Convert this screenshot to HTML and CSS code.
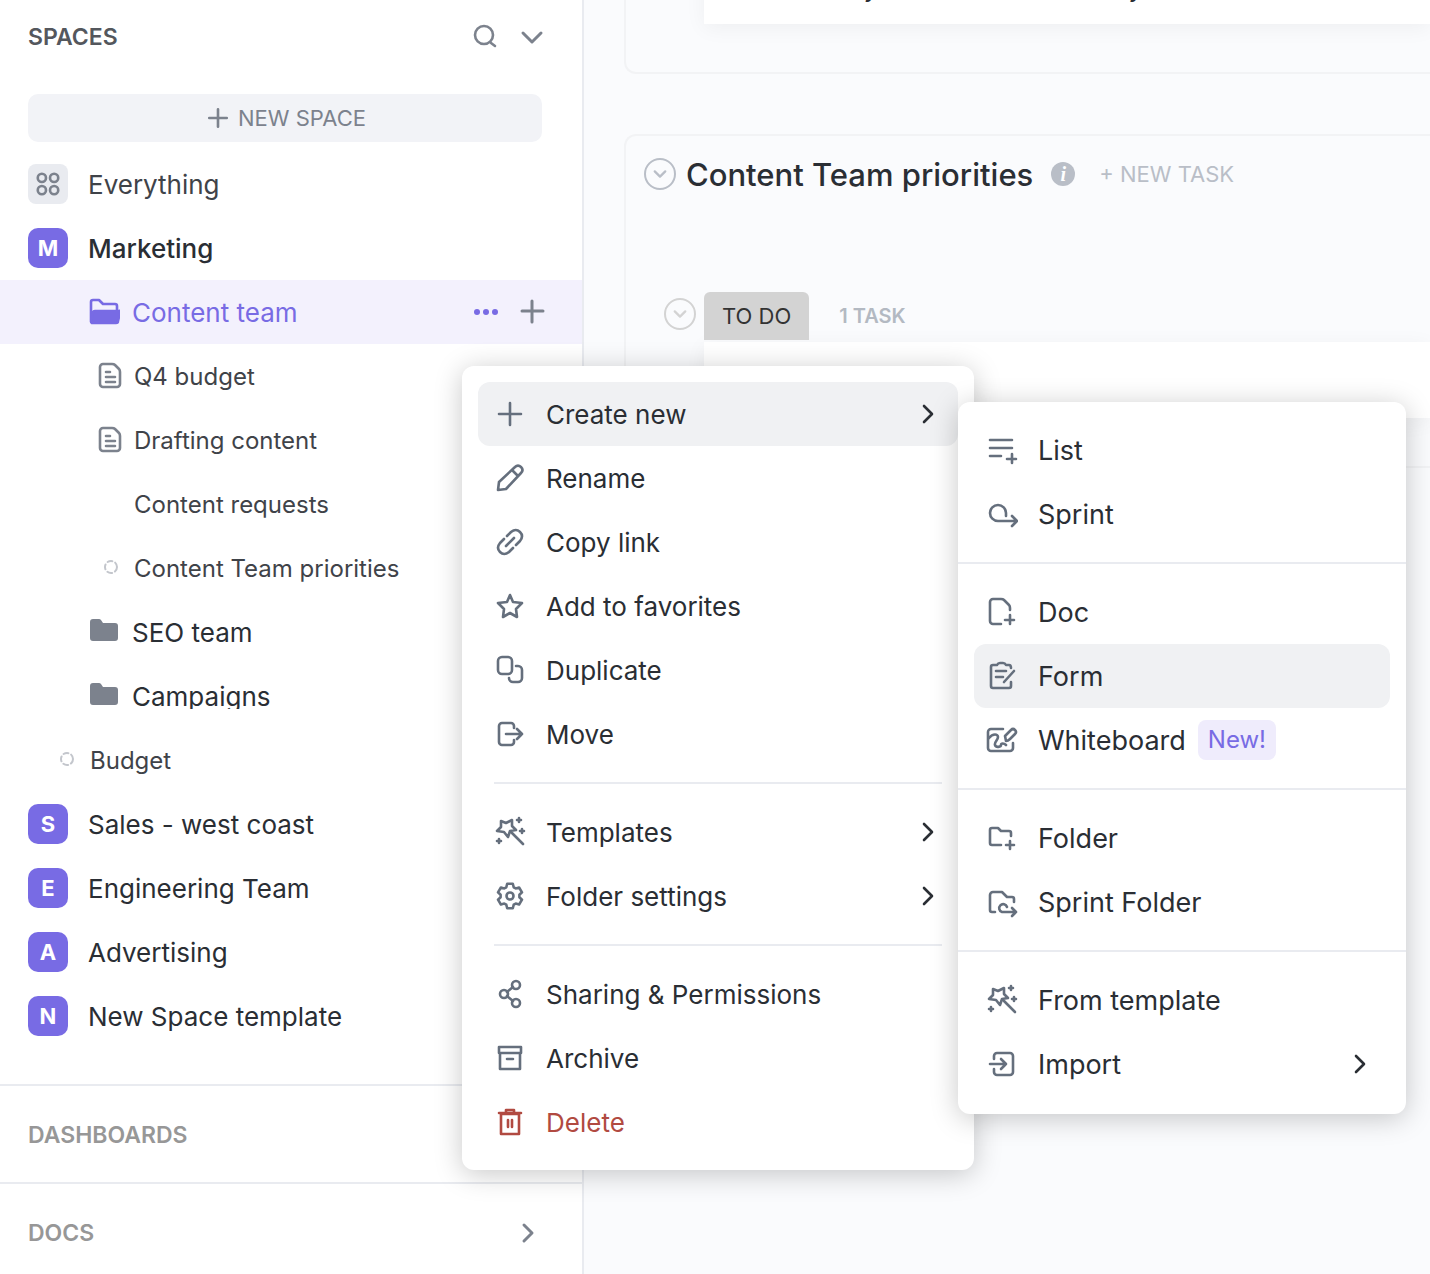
FILE: index.html
```html
<!DOCTYPE html>
<html lang="en">
<head>
    <meta charset="UTF-8">
    <meta name="viewport" content="width=device-width, initial-scale=1.0">
    <title>Spaces</title>
    <link rel="stylesheet" href="styles.css">
</head>
<body>
    <!-- Shared icons -->
    <svg class="sprite" aria-hidden="true">
        <symbol id="i-chevron" viewBox="0 0 32 32"><path d="M12 8l8 8-8 8"/></symbol>
        <symbol id="i-down" viewBox="0 0 32 32"><path d="M10 13l6 6 6-6"/></symbol>
        <symbol id="i-doc" viewBox="0 0 32 32"><path d="M9 4h9q2 0 3 1l4 4q1 1 1 3v12a3 3 0 0 1-3 3H9a3 3 0 0 1-3-3V7a3 3 0 0 1 3-3zM12 12h4M12 17h9M12 22h9"/></symbol>
        <symbol id="i-ring" viewBox="0 0 32 32"><circle cx="17" cy="15" r="6"/></symbol>
        <symbol id="i-folder" viewBox="0 0 32 32"><path d="M2 6a3 3 0 0 1 3-3h6a3 3 0 0 1 2 1l2 3h12a3 3 0 0 1 3 3v12a3 3 0 0 1-3 3H5a3 3 0 0 1-3-3z"/></symbol>
        <symbol id="i-wand" viewBox="0 0 32 32">
            <path d="M7 5l5 2 6-3v6l4 4-6 1-2 6-4-5-7-1 4-4zM18 17l11 11"/>
            <path d="M25 2v4M23 4h4M28 13v4M26 15h4M5 23v4M3 25h4"/>
        </symbol>
    </svg>

    <div class="app">
        <aside class="sidebar">
            <header class="sidebar-header">
                <h2>SPACES</h2>
                <button class="icon-btn" aria-label="Search"><svg viewBox="0 0 32 32"><circle cx="16" cy="14" r="9"/><path d="M23 22l4 3"/></svg></button>
                <button class="icon-btn bold" aria-label="Collapse"><svg viewBox="0 0 32 32"><path d="M7 12l9 9 9-9"/></svg></button>
            </header>
            <button class="new-space"><svg class="icon" viewBox="0 0 32 32"><path d="M16 6v20M6 16h20"/></svg>NEW SPACE</button>

            <nav class="tree">
                <a href="#" class="row everything"><span class="badge gray"><svg class="icon" viewBox="0 0 32 32"><circle cx="9" cy="9" r="4.700"/><circle cx="23" cy="9" r="4.700"/><circle cx="9" cy="23" r="4.700"/><circle cx="23" cy="23" r="4.700"/></svg></span>Everything</a>
                <a href="#" class="row current"><span class="badge">M</span>Marketing</a>
                <div class="row folder selected">
                    <svg class="icon open-folder" viewBox="0 0 32 32"><path d="M3 24V6a2 2 0 0 1 2-2h6l4 4h12a2 2 0 0 1 2 2v4"/><path class="solid" d="M7 15h24a1 1 0 0 1 1 2l-2 8a2 2 0 0 1-2 2H4a2 2 0 0 1-1-2l2-8a2 2 0 0 1 2-2z"/></svg>
                    <a href="#" class="name">Content team</a>
                    <button class="icon-btn dots" aria-label="More"><svg viewBox="0 0 32 32"><circle cx="7" cy="16" r="3"/><circle cx="16" cy="16" r="3"/><circle cx="25" cy="16" r="3"/></svg></button>
                    <button class="icon-btn bold" aria-label="Add"><svg viewBox="0 0 32 32"><path d="M16 5v21M6 15h21"/></svg></button>
                </div>
                <a href="#" class="row item"><svg class="icon"><use href="#i-doc"/></svg>Q4 budget</a>
                <a href="#" class="row item"><svg class="icon"><use href="#i-doc"/></svg>Drafting content</a>
                <a href="#" class="row item"><span class="icon"></span>Content requests</a>
                <a href="#" class="row item"><svg class="icon ring"><use href="#i-ring"/></svg>Content Team priorities</a>
                <a href="#" class="row folder"><svg class="icon closed"><use href="#i-folder"/></svg><span class="name">SEO team</span></a>
                <a href="#" class="row folder"><svg class="icon closed"><use href="#i-folder"/></svg><span class="name">Campaigns</span></a>
                <a href="#" class="row item top"><svg class="icon ring"><use href="#i-ring"/></svg>Budget</a>
                <a href="#" class="row"><span class="badge">S</span>Sales - west coast</a>
                <a href="#" class="row"><span class="badge">E</span>Engineering Team</a>
                <a href="#" class="row"><span class="badge">A</span>Advertising</a>
                <a href="#" class="row"><span class="badge">N</span>New Space template</a>
            </nav>

            <section class="section"><h2>DASHBOARDS</h2></section>
            <section class="section"><h2>DOCS</h2><button class="icon-btn bold" aria-label="Open docs"><svg><use href="#i-chevron"/></svg></button></section>
        </aside>

        <main class="main">
            <section class="card first">
                <div class="task-row">Write a story about the launch day</div>
            </section>
            <section class="card">
                <header class="card-header">
                    <button class="toggle" aria-label="Collapse list"><svg><use href="#i-down"/></svg></button>
                    <h1>Content Team priorities</h1>
                    <span class="info">i</span>
                    <button class="new-task">+ NEW TASK</button>
                </header>
                <div class="status">
                    <button class="toggle light" aria-label="Collapse status"><svg><use href="#i-down"/></svg></button>
                    <span class="todo">TO DO</span>
                    <span class="count">1 TASK</span>
                </div>
                <div class="task-row"></div>
            </section>
        </main>
    </div>

    <!-- Folder menu -->
    <div class="menu folder-menu">
        <button class="menu-item active"><svg class="icon" viewBox="0 0 32 32"><path d="M16 5v22M5 16h22"/></svg>Create new<svg class="icon arrow"><use href="#i-chevron"/></svg></button>
        <button class="menu-item"><svg class="icon" viewBox="0 0 32 32"><path d="M4 28l1-8L21 5q3-3 6 0t0 6L12 27zM18 8l6 6"/></svg>Rename</button>
        <button class="menu-item"><svg class="icon" viewBox="0 0 32 32"><path d="M13 10l4-4q5-4 9 0t0 9l-4 4M10 13l-4 4q-4 5 0 9t9 0l4-4M12 20l8-8"/></svg>Copy link</button>
        <button class="menu-item"><svg class="icon" viewBox="0 0 32 32"><path d="M16 5l3 7 9 1-6 6 1 8-7-4-7 4 1-8-6-6 9-1z"/></svg>Add to favorites</button>
        <button class="menu-item"><svg class="icon" viewBox="0 0 32 32"><rect x="4" y="3" width="14" height="17" rx="4"/><path d="M22 12h2a4 4 0 0 1 4 4v8a4 4 0 0 1-4 4h-5a4 4 0 0 1-4-4"/></svg>Duplicate</button>
        <button class="menu-item"><svg class="icon" viewBox="0 0 32 32"><path d="M20 10V8a3 3 0 0 0-3-3H8a3 3 0 0 0-3 3v16a3 3 0 0 0 3 3h9a3 3 0 0 0 3-3v-2M12 16h16M23 11l5 5-5 5"/></svg>Move</button>
        <hr>
        <button class="menu-item"><svg class="icon"><use href="#i-wand"/></svg>Templates<svg class="icon arrow"><use href="#i-chevron"/></svg></button>
        <button class="menu-item"><svg class="icon" viewBox="0 0 32 32"><path d="M13.200 3.800H18.800L19.700 7.300 21.700 8.400 25.100 7.500 28 12.300 25.400 14.800V17.200L28 19.700 25.100 24.500 21.700 23.600 19.700 24.700 18.800 28.200H13.200L12.300 24.700 10.300 23.600 6.900 24.500 4 19.700 6.600 17.200V14.800L4 12.300 6.900 7.500 10.300 8.400 12.300 7.300z"/><circle cx="16" cy="16" r="3.500"/></svg>Folder settings<svg class="icon arrow"><use href="#i-chevron"/></svg></button>
        <hr>
        <button class="menu-item"><svg class="icon" viewBox="0 0 32 32"><circle cx="22" cy="7" r="4"/><circle cx="10" cy="16" r="4"/><circle cx="22" cy="25" r="4"/><path d="M13 14l6-5M13 18l6 5"/></svg>Sharing &amp; Permissions</button>
        <button class="menu-item"><svg class="icon" viewBox="0 0 32 32"><path d="M5 5h22v6H5zM6 11h20v16H6zM13 17h6"/></svg>Archive</button>
        <button class="menu-item danger"><svg class="icon" viewBox="0 0 32 32"><path d="M5 7h22M12 6V4h8v2M7 8h18v20H7zM14 14v7M18 14v7"/></svg>Delete</button>
    </div>

    <!-- Create new submenu -->
    <div class="menu create-menu">
        <button class="menu-item"><svg class="icon" viewBox="0 0 32 32"><path d="M4 6h22M4 14h22M4 22h11M26 20v9M21 25h9"/></svg>List</button>
        <button class="menu-item"><svg class="icon" viewBox="0 0 32 32"><path d="M20 18v-3a8 8 0 1 0-8 8h19M26 18l5 5-5 5"/></svg>Sprint</button>
        <hr>
        <button class="menu-item"><svg class="icon" viewBox="0 0 32 32"><path d="M15 28H7a3 3 0 0 1-3-3V6a3 3 0 0 1 3-3h8q2 0 3 1l5 5q1 1 1 3v2M24 19v9M19 24h9"/></svg>Doc</button>
        <button class="menu-item active"><svg class="icon" viewBox="0 0 32 32"><path d="M11 5H7a2 2 0 0 0-2 2v19a2 2 0 0 0 2 2h16a2 2 0 0 0 2-2v-4M11 5q1-2 3-2h3q2 0 3 2h3q2 0 2 3M10 11h10M10 17h7M18 22l10-11"/></svg>Form</button>
        <button class="menu-item"><svg class="icon" viewBox="0 0 32 32"><path d="M17 5H5a3 3 0 0 0-3 3v16a3 3 0 0 0 3 3h19a3 3 0 0 0 3-3v-5"/><path d="M3 14c4-5 9-4 9-1 0 3-4 5-3 8s6 2 6 0 3-2 5 0M20 17l-1-5 6-6q2-2 4 0t0 4l-5 5q-2 2-4 2z"/></svg>Whiteboard<span class="new">New!</span></button>
        <hr>
        <button class="menu-item"><svg class="icon" viewBox="0 0 32 32"><path d="M15 23H6a2 2 0 0 1-2-2V8a2 2 0 0 1 2-2h6l3 3h8a2 2 0 0 1 2 2v3M24 19v8M20 23h8"/></svg>Folder</button>
        <button class="menu-item"><svg class="icon" viewBox="0 0 32 32"><path d="M9 26H6a2 2 0 0 1-2-2V9a3 3 0 0 1 3-3h9l5 5h5a2 2 0 0 1 2 2v3M21 21a4 4 0 1 0-5 5h14M26 22l4 4-4 4"/></svg>Sprint Folder</button>
        <hr>
        <button class="menu-item"><svg class="icon"><use href="#i-wand"/></svg>From template</button>
        <button class="menu-item"><svg class="icon" viewBox="0 0 32 32"><path d="M8 11V8a3 3 0 0 1 3-3h13a3 3 0 0 1 3 3v16a3 3 0 0 1-3 3H11a3 3 0 0 1-3-3v-3M4 16h16M15 11l5 5-5 5"/></svg>Import<svg class="icon arrow"><use href="#i-chevron"/></svg></button>
    </div>
</body>
</html>
```
FILE: styles.css
```css
* { box-sizing: border-box; }
body { margin: 0; font-family: Inter, "Liberation Sans", sans-serif; font-size: 26px; color: #2a2e34; background: #fafbfd; overflow: hidden; }
h1, h2 { margin: 0; }
a { color: inherit; text-decoration: none; }
button { font: inherit; color: inherit; background: none; border: none; padding: 0; cursor: pointer; }
svg { fill: none; stroke: currentColor; stroke-width: 2.6; stroke-linecap: round; stroke-linejoin: round; }
.sprite { display: none; }
.icon { width: 32px; height: 32px; flex: none; }
.app { display: flex; min-height: 100vh; }

/* Sidebar */
.sidebar { flex: 0 0 584px; background: #fff; border-right: 2px solid #e9ebf0; }
.sidebar-header { display: flex; align-items: center; gap: 16px; height: 74px; padding: 0 34px 0 28px; }
h2 { flex: 1; font-size: 23px; font-weight: 600; color: #54575d; }
.icon-btn { width: 32px; height: 32px; color: #7c828d; }
.icon-btn svg { display: block; width: 32px; height: 32px; }
.bold svg { stroke-width: 3; }
.new-space { display: flex; align-items: center; justify-content: center; gap: 6px; width: calc(100% - 68px); height: 48px; margin: 20px 40px 10px 28px; border-radius: 10px; background: #f2f3f7; color: #7c828d; font-size: 22px; }
.new-space .icon { width: 28px; height: 28px; stroke-width: 3; }
.row { display: flex; align-items: center; height: 64px; padding: 0 34px 0 28px; }
.badge { display: flex; align-items: center; justify-content: center; width: 40px; height: 40px; margin-right: 20px; border-radius: 10px; background: #786be4; color: #fff; font-size: 22px; font-weight: 700; }
.badge.gray { border-radius: 8px; background: #e9ebf0; color: #7c828d; }
.badge .icon { width: 28px; height: 28px; stroke-width: 3; }
.everything { color: #3f4349; }
.current { font-weight: 500; }
.folder { padding-left: 88px; }
.folder .name { flex: 1; margin-left: 12px; padding-top: 2px; line-height: 24px; overflow: hidden; }
.folder.selected { background: #f3f1fd; color: #786be4; }
.selected .name { line-height: 32px; }
.selected .icon-btn { margin-left: 14px; }
.solid { fill: currentColor; }
.icon-btn.dots { color: #786be4; }
.dots svg { fill: currentColor; stroke: none; }
.closed { fill: #7c828d; stroke: none; }
.item { gap: 8px; padding-left: 94px; font-size: 24px; color: #3f4349; }
.item .icon { color: #7c828d; }
.item .ring { color: #c3c6cc; stroke-width: 2; stroke-dasharray: 5 3; }
.item.top { padding-left: 50px; }
.section { display: flex; align-items: center; height: 98px; padding: 2px 38px 0 28px; border-top: 2px solid #e9ebf0; }
.section h2 { color: #979797; }
.tree { padding-bottom: 36px; }

/* List view */
.main { flex: 1; min-width: 0; padding-left: 40px; }
.card { border: 2px solid #f2f3f5; border-right: none; border-radius: 12px 0 0 12px; padding-bottom: 48px; }
.card.first { border-top: none; border-top-left-radius: 0; margin: -52px 0 60px; }
.task-row { height: 76px; margin-left: 78px; padding-left: 18px; line-height: 80px; background: #fff; box-shadow: 0 4px 20px rgba(0, 0, 0, 0.05); }
.card-header { display: flex; align-items: center; height: 76px; padding-left: 18px; }
h1 { margin: 0 18px 0 10px; font-size: 31px; font-weight: 500; }
.toggle { width: 32px; height: 32px; border: 2px solid #b9bec7; border-radius: 50%; color: #b9bec7; }
.toggle svg { display: block; width: 28px; height: 28px; }
.toggle.light { border-color: #d3d3d3; color: #d3d3d3; margin: 0 8px 4px 0; }
.info { width: 24px; height: 24px; border-radius: 50%; background: #b9bec7; color: #fff; font: italic bold 20px/24px "Liberation Serif", serif; text-align: center; }
.new-task { margin-left: 24px; font-size: 22px; color: #b9bec7; }
.status { display: flex; align-items: center; height: 48px; margin: 80px 0 2px 38px; }
.todo { height: 48px; padding: 0 18px; border-radius: 6px 6px 0 0; background: #d3d3d3; font-size: 22px; line-height: 48px; color: #333; }
.count { margin-left: 30px; font-size: 20px; font-weight: 600; color: #b3b9c2; }

/* Menus */
.menu { position: absolute; background: #fff; border-radius: 12px; padding: 16px; box-shadow: 0 4px 28px rgba(0, 0, 0, 0.22); }
.folder-menu { left: 462px; top: 366px; width: 512px; }
.create-menu { left: 958px; top: 402px; width: 448px; padding-bottom: 18px; font-size: 27px; }
.menu-item { display: flex; align-items: center; gap: 20px; width: 100%; height: 64px; padding: 0 14px 0 16px; border-radius: 12px; text-align: left; }
.menu-item .icon { color: #656f7d; }
.menu-item .arrow { margin-left: auto; color: #2a2e34; }
.menu-item.active { background: #f0f1f3; }
.menu hr { height: 2px; margin: 16px; border: none; background: #e9ebf0; }
.create-menu .menu-item { padding-left: 12px; }
.create-menu hr { margin: 16px -16px; }
.menu-item.danger, .menu-item.danger .icon { color: #b14a41; }
.new { margin-left: -8px; padding: 0 10px; border-radius: 8px; background: #efecfc; color: #786be4; font-size: 24px; line-height: 40px; }
```
